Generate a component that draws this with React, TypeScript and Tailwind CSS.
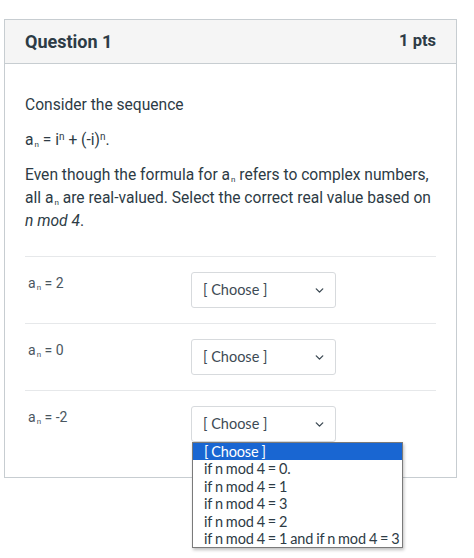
import { ChevronDown } from 'lucide-react';

const rows = [
  { label: '2', open: false },
  { label: '0', open: false },
  { label: '-2', open: true },
];

const options = [
  'if n mod 4 = 0.',
  'if n mod 4 = 1',
  'if n mod 4 = 3',
  'if n mod 4 = 2',
  'if n mod 4 = 1 and if n mod 4 = 3',
];

// tiny subscript n, drawn as text like the reference
function Sub() {
  return <sub className="ml-[1px] text-[8px]">n</sub>;
}

function ChooseSelect({ open }: { open: boolean }) {
  return (
    <div className="relative">
      <div className="flex h-[36px] w-[145px] items-center justify-between rounded-[3px] border border-[#d7dadd] bg-white pl-[11px] pr-[9px] font-['Lato',sans-serif] text-[14.5px] text-[#3d4a54]">
        <span>[ Choose ]</span>
        <ChevronDown size={13} strokeWidth={2.5} className="text-[#3d4a54]" />
      </div>
      {open && (
        <div className="absolute left-[1px] top-[36px] z-10 w-[211px] border border-[#7a7a7a] bg-white font-['Lato',sans-serif] text-[14.5px] leading-[17.4px] tracking-[-0.15px] text-[#2d3b45] shadow-[1px_2px_3px_rgba(0,0,0,0.25)] [word-spacing:-0.6px]">
          <div className="bg-[#1966d2] pl-[11px] text-white">[ Choose ]</div>
          {options.map((o) => (
            <div key={o} className="whitespace-nowrap pl-[11px]">
              {o}
            </div>
          ))}
        </div>
      )}
    </div>
  );
}

export default function App() {
  return (
    <div className="min-h-[558px] bg-white pt-[19px] pl-[4px] font-['Roboto',sans-serif] text-[#2d3b45]">
      <div className="w-[453px] border border-[#c7cdd1] bg-white">
        <div className="flex h-[44px] items-center justify-between border-b border-[#c7cdd1] bg-[#f5f5f5] px-[20px]">
          <h2 className="text-[18px] font-bold">Question 1</h2>
          <span className="text-[16.5px] font-bold">1 pts</span>
        </div>

        <div className="px-[20px] pt-[30px] pb-[20px]">
          <div className="text-[15.6px] leading-[23px]">
            <p>Consider the sequence</p>
            <p className="mt-[12px]">
              a<Sub /> = i<sup className="text-[10px]">n</sup> + (-i)<sup className="text-[10px]">n</sup>.
            </p>
            <p className="mt-[12px]">
              Even though the formula for a<Sub /> refers to complex numbers, all a<Sub /> are real-valued. Select the correct real value based on <em>n mod 4</em>.
            </p>
          </div>

          <div className="mt-[23px]">
            {rows.map((r) => (
              <div key={r.label} className="flex border-t border-[#e6e8ea] py-[15px]">
                <div className="w-[166px] pl-[3px] pt-[1px] text-[14px] leading-[20px] text-[#4a5660]">
                  a<Sub /> = {r.label}
                </div>
                <ChooseSelect open={r.open} />
              </div>
            ))}
          </div>
        </div>
      </div>
    </div>
  );
}
